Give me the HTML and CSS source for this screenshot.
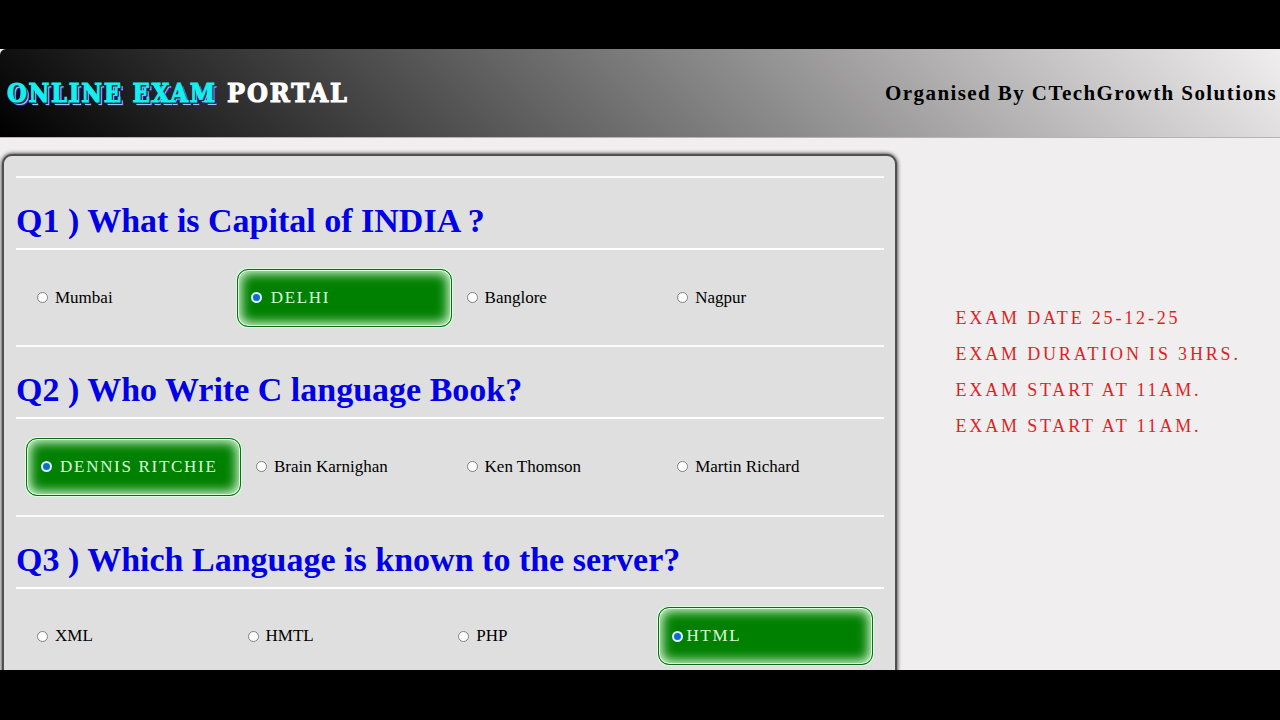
FILE: index.html
```html
<!DOCTYPE html>
<html lang="en">
<head>
<meta charset="utf-8">
<title>Online Exam Portal</title>
<link rel="stylesheet" href="styles.css">
</head>
<body>
<div class="page">
  <header class="header">
    <h1 class="brand"><span class="brand-accent">ONLINE EXAM</span><span class="brand-rest">PORTAL</span></h1>
    <div class="organiser">Organised By CTechGrowth Solutions</div>
  </header>
  <div class="content">
    <main class="panel">
      <section class="question">
        <h2 class="question-title">Q1 ) What is Capital of INDIA ?</h2>
        <div class="options">
          <label class="option"><input type="radio" name="q1"><span>Mumbai</span></label>
          <label class="option selected"><input type="radio" name="q1" checked><span>DELHI</span></label>
          <label class="option"><input type="radio" name="q1"><span>Banglore</span></label>
          <label class="option"><input type="radio" name="q1"><span>Nagpur</span></label>
        </div>
      </section>
      <section class="question">
        <h2 class="question-title">Q2 ) Who Write C language Book?</h2>
        <div class="options">
          <label class="option selected"><input type="radio" name="q2" checked><span>DENNIS RITCHIE</span></label>
          <label class="option"><input type="radio" name="q2"><span>Brain Karnighan</span></label>
          <label class="option"><input type="radio" name="q2"><span>Ken Thomson</span></label>
          <label class="option"><input type="radio" name="q2"><span>Martin Richard</span></label>
        </div>
      </section>
      <section class="question">
        <h2 class="question-title">Q3 ) Which Language is known to the server?</h2>
        <div class="options">
          <label class="option"><input type="radio" name="q3"><span>XML</span></label>
          <label class="option"><input type="radio" name="q3"><span>HMTL</span></label>
          <label class="option"><input type="radio" name="q3"><span>PHP</span></label>
          <label class="option selected tight"><input type="radio" name="q3" checked><span>HTML</span></label>
        </div>
      </section>
    </main>
    <aside class="notices">
      <p>EXAM DATE 25-12-25</p>
      <p>EXAM DURATION IS 3HRS.</p>
      <p>EXAM START AT 11AM.</p>
      <p>EXAM START AT 11AM.</p>
    </aside>
  </div>
</div>
</body>
</html>
```
FILE: styles.css
```css
* { box-sizing: border-box; }
body {
  margin: 0;
  height: 720px;
  padding: 49px 0 50px;
  background: #000;
  font-family: "Liberation Serif", "Times New Roman", serif;
  overflow: hidden;
}
.page {
  height: 621px;
  background: #f0eeef;
  overflow: hidden;
}
.header {
  height: 89px;
  padding: 0 3px 0 7px;
  display: flex;
  align-items: center;
  justify-content: space-between;
  border-top-left-radius: 6px;
  border-bottom: 1px solid #b5b3b4;
  background: linear-gradient(45deg, #000, #f0eeef);
}
.brand {
  margin: 0;
  display: flex;
  gap: 12px;
  font: bold 26px/30px "DejaVu Serif", serif;
  letter-spacing: 2px;
  white-space: nowrap;
  color: #fff;
}
.brand-accent, .brand-rest {
  transform-origin: left center;
  -webkit-text-stroke: 1.1px currentColor;
}
.brand-accent {
  width: 208px;
  transform: scaleX(0.875);
  color: #14f0f0;
  text-shadow: 2px 2px 0 #14303c, 3px 3px 0 #b4b8f0, 4px 4px 1px #2020c8;
}
.brand-rest {
  width: 120px;
  transform: scaleX(0.925);
}
.organiser {
  font-size: 21px;
  font-weight: bold;
  letter-spacing: 1.42px;
  white-space: nowrap;
}
.content {
  display: flex;
  padding: 16px 0 0 2px;
}
.panel {
  flex: none;
  width: 895px;
  height: 560px;
  padding: 20px 11px 0 12px;
  border: 2px solid #505050;
  border-radius: 10px;
  background: #dfdfdf;
  box-shadow: 0 0 4px #111;
}
.question {
  height: 169.3px;
  border-top: 2px solid #fbfbfb;
}
.question-title {
  margin: 0;
  height: 72px;
  padding-top: 23px;
  border-bottom: 2px solid #fff;
  font-size: 34px;
  line-height: 40px;
  white-space: nowrap;
  color: #0000e6;
}
.options {
  display: flex;
  align-items: center;
  height: 95px;
  padding-left: 10px;
}
.option {
  flex: none;
  width: 210.6px;
  height: 58px;
  padding-left: 11px;
  display: flex;
  align-items: center;
  gap: 7px;
  font-size: 17px;
  white-space: nowrap;
}
.option input {
  appearance: none;
  flex: none;
  width: 11px;
  height: 11px;
  margin: 0;
  border: 1px solid #808080;
  border-radius: 50%;
  background: #fff;
}
.selected {
  width: 215.4px;
  margin-right: 3.6px;
  padding-left: 13.6px;
  gap: 8.5px;
  border: 1px solid #0b6b16;
  border-radius: 11px;
  background: #008000;
  color: #dcffdc;
  letter-spacing: 1.7px;
  box-shadow: 0 0 0 1px #dcffdc, inset 0 0 0 1px #dcffdc, inset 0 0 12px 3px #e8ffe8;
}
.selected input {
  border: 2px solid #d8f4ff;
  background: #0b6ccc;
}
.tight { gap: 3px; }
.notices {
  padding: 146px 0 0 58.5px;
  font-size: 18px;
  line-height: 36px;
  letter-spacing: 2.83px;
  color: #e01f1f;
  white-space: nowrap;
}
.notices p { margin: 0; }
```
